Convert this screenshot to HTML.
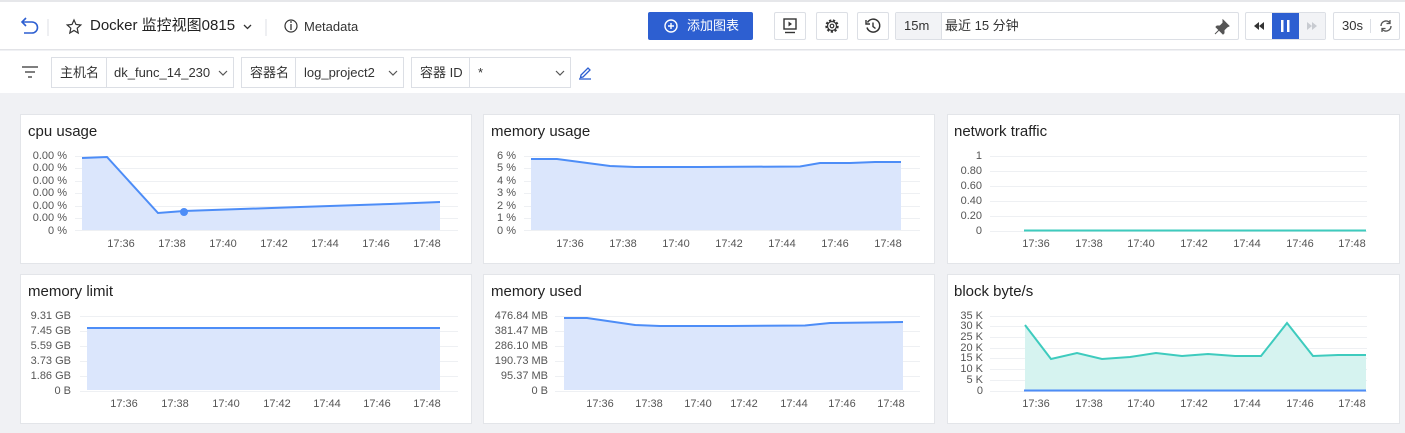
<!DOCTYPE html>
<html><head><meta charset="utf-8"><style>
*{margin:0;padding:0;box-sizing:border-box}
body{width:1405px;height:433px;background:#f0f1f4;font-family:"Liberation Sans","Noto Sans CJK SC",sans-serif;color:#333;position:relative;overflow:hidden}
.abs{position:absolute}
.hdr{left:0;top:0;width:1405px;height:50px;background:#fff;border-top:2px solid #e6e7ea;border-bottom:1px solid #e2e3e7}
.flt{left:0;top:51px;width:1405px;height:42px;background:#fff}
.panel{position:absolute;background:#fff;border:1px solid #e3e5e9}
.ib{position:absolute;top:12px;height:28px;border:1px solid #dcdfe5;border-radius:2px;background:#fff}
.fg{position:absolute;top:57px;height:31px;border:1px solid #dcdfe5;background:#fff;font-size:13px}
.fg span{position:absolute;top:0;line-height:29px;height:29px;white-space:nowrap}
.fg i{position:absolute;top:0;width:1px;height:29px;background:#dcdfe5}
.lh{line-height:26px;top:0 !important;white-space:nowrap}
</style></head><body>
<div class="abs hdr"></div>
<div class="abs flt"></div>

<svg class="abs" style="left:0;top:0" width="640" height="50">
<path d="M23 22 h9 a5.5 5.5 0 0 1 0 11 h-8" fill="none" stroke="#2d5fd1" stroke-width="1.6"/>
<path d="M26 18 l-4 4 l4 4" fill="none" stroke="#2d5fd1" stroke-width="1.6"/>
<line x1="48" y1="19" x2="48" y2="36" stroke="#dcdfe5"/>
<path d="M74 20 l2 4.5 4.8 .5 -3.6 3.2 1 4.8 -4.2 -2.5 -4.2 2.5 1 -4.8 -3.6 -3.2 4.8 -.5z" fill="none" stroke="#333" stroke-width="1.2"/>
<path d="M244 25 l3.5 3.5 3.5 -3.5" fill="none" stroke="#333" stroke-width="1.3"/>
<line x1="266" y1="19" x2="266" y2="36" stroke="#dcdfe5"/>
<circle cx="291" cy="26" r="6" fill="none" stroke="#333" stroke-width="1.2"/>
<line x1="291" y1="24" x2="291" y2="30" stroke="#333" stroke-width="1.3"/><circle cx="291" cy="22" r=".9" fill="#333"/>
</svg>
<div class="abs" style="left:90px;top:16px;font-size:15px;line-height:20px;color:#222;white-space:nowrap">Docker 监控视图0815</div>
<div class="abs" style="left:304px;top:18px;font-size:13px;line-height:18px;color:#333">Metadata</div>

<div class="abs" style="left:648px;top:12px;width:105px;height:28px;background:#2d5fd1;border-radius:2px;color:#fff;font-size:13px">
<svg class="abs" style="left:16px;top:7px" width="14" height="14"><circle cx="7" cy="7" r="6" fill="none" stroke="#fff" stroke-width="1.4"/><path d="M7 4v6M4 7h6" stroke="#fff" stroke-width="1.4"/></svg>
<span class="abs lh" style="left:39px;line-height:28px">添加图表</span></div>

<div class="ib" style="left:774px;width:32px"><svg width="30" height="26"><rect x="9" y="6" width="12" height="10" fill="none" stroke="#333" stroke-width="1.4"/><path d="M13.5 8.5 l3.5 2.5 -3.5 2.5z" fill="#333"/><path d="M10 19.5h10" stroke="#333" stroke-width="1.4"/></svg></div>
<div class="ib" style="left:816px;width:32px"><svg width="30" height="26"><circle cx="15" cy="13" r="5.5" fill="none" stroke="#333" stroke-width="2.4" stroke-dasharray="2.2 1.6"/><circle cx="15" cy="13" r="4.5" fill="none" stroke="#333" stroke-width="1.2"/><circle cx="15" cy="13" r="1.8" fill="none" stroke="#333" stroke-width="1.2"/></svg></div>
<div class="ib" style="left:857px;width:32px"><svg width="30" height="26"><path d="M9.5 9.5 a6.5 6.5 0 1 1 -0.5 5" fill="none" stroke="#333" stroke-width="1.5"/><path d="M8 7v4h4" fill="none" stroke="#333" stroke-width="1.4"/><path d="M15 9.5v4l2.5 2" fill="none" stroke="#333" stroke-width="1.4"/></svg></div>
<div class="ib" style="left:895px;width:344px">
<div class="abs" style="left:0;top:0;width:46px;height:26px;background:#f2f3f6;border-right:1px solid #dcdfe5;font-size:13px;line-height:26px;padding-left:8px">15m</div>
<span class="abs lh" style="left:49px;font-size:13px">最近 15 分钟</span>
<svg class="abs" style="left:318px;top:6px" width="16" height="16"><path d="M9 1 l6 6 -2 1 -3 3 0 3 -1 1 -7 -7 1 -1 3 0 3 -3z M5 11 l-4 4" fill="#555" stroke="#555" stroke-width="1"/></svg>
</div>
<div class="ib" style="left:1245px;width:81px;overflow:hidden">
<svg class="abs" style="left:0;top:0" width="81" height="26"><path d="M8 13 l5-4v8z M13 13 l5-4v8z" fill="#333"/><rect x="26" y="0" width="27" height="26" fill="#2d5fd1"/><rect x="35" y="7" width="2.5" height="12" fill="#fff"/><rect x="41" y="7" width="2.5" height="12" fill="#fff"/><rect x="53" y="0" width="28" height="26" fill="#f2f3f6"/><path d="M61 9 l5 4 -5 4z M66 9 l5 4 -5 4z" fill="#c8cbd1"/></svg></div>
<div class="ib" style="left:1333px;width:67px;font-size:13px"><span class="abs lh" style="left:8px">30s</span><i class="abs" style="left:36px;top:6px;width:1px;height:14px;background:#dcdfe5"></i>
<svg class="abs" style="left:44px;top:5px" width="16" height="16"><path d="M3 8 a5 5 0 0 1 9 -3 M13 8 a5 5 0 0 1 -9 3" fill="none" stroke="#555" stroke-width="1.4"/><path d="M12 2v3.5h-3.5M4 14v-3.5h3.5" fill="none" stroke="#555" stroke-width="1.3"/></svg></div>

<svg class="abs" style="left:20px;top:64px" width="20" height="18"><path d="M2 3h16M5 8h10M8 13h4" stroke="#555" stroke-width="1.6"/></svg>
<div class="fg" style="left:51px;width:183px"><span style="left:8px">主机名</span><i style="left:54px"></i><span style="left:62px">dk_func_14_230</span><svg class="abs" style="left:166px;top:11px" width="10" height="8"><path d="M1 2l4 4 4-4" fill="none" stroke="#555" stroke-width="1.2"/></svg></div>
<div class="fg" style="left:241px;width:163px"><span style="left:8px">容器名</span><i style="left:53px"></i><span style="left:62px">log_project2</span><svg class="abs" style="left:146px;top:11px" width="10" height="8"><path d="M1 2l4 4 4-4" fill="none" stroke="#555" stroke-width="1.2"/></svg></div>
<div class="fg" style="left:411px;width:160px"><span style="left:8px">容器 ID</span><i style="left:57px"></i><span style="left:66px">*</span><svg class="abs" style="left:143px;top:11px" width="10" height="8"><path d="M1 2l4 4 4-4" fill="none" stroke="#555" stroke-width="1.2"/></svg></div>
<svg class="abs" style="left:577px;top:64px" width="16" height="16"><path d="M4 11 l7-7 2 2 -7 7 -2.5 .5z" fill="none" stroke="#2d5fd1" stroke-width="1.3"/><path d="M2 15h12" stroke="#2d5fd1" stroke-width="1.3"/></svg>

<div class="panel" style="left:20px;top:114px;width:452px;height:150px"></div>
<div class="panel" style="left:483px;top:114px;width:452px;height:150px"></div>
<div class="panel" style="left:947px;top:114px;width:453px;height:150px"></div>
<div class="panel" style="left:20px;top:274px;width:452px;height:150px"></div>
<div class="panel" style="left:483px;top:274px;width:452px;height:150px"></div>
<div class="panel" style="left:947px;top:274px;width:453px;height:150px"></div>

<svg class="abs" style="left:0;top:0" width="1405" height="433" font-family="Liberation Sans, sans-serif">
<g font-size="15" fill="#222">
<text x="28" y="136">cpu usage</text><text x="491" y="136">memory usage</text><text x="954" y="136">network traffic</text>
<text x="28" y="296">memory limit</text><text x="491" y="296">memory used</text><text x="954" y="296">block byte/s</text>
</g>
<g stroke="#eef0f3" stroke-width="1">
<path d="M75 156.5h383M75 168.5h383M75 181.5h383M75 193.5h383M75 206.5h383M75 218.5h383M75 230.5h383"/>
<path d="M524 156.5h396M524 168.5h396M524 181.5h396M524 193.5h396M524 206.5h396M524 218.5h396M524 230.5h396"/>
<path d="M990 156.5h377M990 171.5h377M990 186.5h377M990 201.5h377M990 216.5h377M990 231.5h377"/>
<path d="M80 316.5h378M80 331.5h378M80 346.5h378M80 361.5h378M80 376.5h378M80 391.5h378"/>
<path d="M555 316.5h365M555 331.5h365M555 346.5h365M555 361.5h365M555 376.5h365M555 391.5h365"/>
<path d="M990 316.5h377M990 326.5h377M990 337.5h377M990 348.5h377M990 358.5h377M990 369.5h377M990 380.5h377M990 391.5h377"/>
</g>
<g font-size="11" fill="#555" text-anchor="end">
<text x="67" y="159">0.00 %</text><text x="67" y="171">0.00 %</text><text x="67" y="184">0.00 %</text><text x="67" y="196">0.00 %</text><text x="67" y="209">0.00 %</text><text x="67" y="221">0.00 %</text><text x="67" y="234">0 %</text>
<text x="516" y="159">6 %</text><text x="516" y="171">5 %</text><text x="516" y="184">4 %</text><text x="516" y="196">3 %</text><text x="516" y="209">2 %</text><text x="516" y="221">1 %</text><text x="516" y="234">0 %</text>
<text x="982" y="159">1</text><text x="982" y="174">0.80</text><text x="982" y="189">0.60</text><text x="982" y="204">0.40</text><text x="982" y="219">0.20</text><text x="982" y="234">0</text>
<text x="71" y="319">9.31 GB</text><text x="71" y="334">7.45 GB</text><text x="71" y="349">5.59 GB</text><text x="71" y="364">3.73 GB</text><text x="71" y="379">1.86 GB</text><text x="71" y="394">0 B</text>
<text x="548" y="319">476.84 MB</text><text x="548" y="334">381.47 MB</text><text x="548" y="349">286.10 MB</text><text x="548" y="364">190.73 MB</text><text x="548" y="379">95.37 MB</text><text x="548" y="394">0 B</text>
<text x="983" y="319">35 K</text><text x="983" y="329">30 K</text><text x="983" y="340">25 K</text><text x="983" y="351">20 K</text><text x="983" y="361">15 K</text><text x="983" y="372">10 K</text><text x="983" y="383">5 K</text><text x="983" y="394">0</text>
</g>
<g font-size="11" fill="#555" text-anchor="middle">
<text x="121" y="247">17:36</text><text x="172" y="247">17:38</text><text x="223" y="247">17:40</text><text x="274" y="247">17:42</text><text x="325" y="247">17:44</text><text x="376" y="247">17:46</text><text x="427" y="247">17:48</text>
<text x="570" y="247">17:36</text><text x="623" y="247">17:38</text><text x="676" y="247">17:40</text><text x="729" y="247">17:42</text><text x="782" y="247">17:44</text><text x="835" y="247">17:46</text><text x="888" y="247">17:48</text>
<text x="1036" y="247">17:36</text><text x="1089" y="247">17:38</text><text x="1141" y="247">17:40</text><text x="1194" y="247">17:42</text><text x="1247" y="247">17:44</text><text x="1300" y="247">17:46</text><text x="1352" y="247">17:48</text>
<text x="124" y="407">17:36</text><text x="175" y="407">17:38</text><text x="226" y="407">17:40</text><text x="277" y="407">17:42</text><text x="327" y="407">17:44</text><text x="377" y="407">17:46</text><text x="427" y="407">17:48</text>
<text x="600" y="407">17:36</text><text x="649" y="407">17:38</text><text x="698" y="407">17:40</text><text x="744" y="407">17:42</text><text x="794" y="407">17:44</text><text x="842" y="407">17:46</text><text x="891" y="407">17:48</text>
<text x="1036" y="407">17:36</text><text x="1089" y="407">17:38</text><text x="1141" y="407">17:40</text><text x="1194" y="407">17:42</text><text x="1247" y="407">17:44</text><text x="1300" y="407">17:46</text><text x="1352" y="407">17:48</text>
</g>
<path d="M82 158L107 157L158 213L184 211L300 207L390 204L440 202V230H82Z" fill="#dbe6fc"/>
<path d="M82 158L107 157L158 213L184 211L300 207L390 204L440 202" fill="none" stroke="#4d8df7" stroke-width="2"/>
<circle cx="184" cy="212" r="4" fill="#4d8df7"/>
<path d="M531 159L557 159L610 166L635 167L700 167L800 166.5L820 163L850 163L875 162L901 162V230H531Z" fill="#dbe6fc"/>
<path d="M531 159L557 159L610 166L635 167L700 167L800 166.5L820 163L850 163L875 162L901 162" fill="none" stroke="#4d8df7" stroke-width="2"/>
<path d="M1024 230.5H1366" stroke="#3ecbbe" stroke-width="2"/>
<path d="M87 328H440V390H87Z" fill="#dbe6fc"/>
<path d="M87 328H440" stroke="#4d8df7" stroke-width="2"/>
<path d="M564 318L587 318L635 325L660 326L730 326L805 325.5L830 323L870 322.5L903 322V390H564Z" fill="#dbe6fc"/>
<path d="M564 318L587 318L635 325L660 326L730 326L805 325.5L830 323L870 322.5L903 322" fill="none" stroke="#4d8df7" stroke-width="2"/>
<path d="M1025 325L1051 359L1077 353L1102 359L1130 357L1156 353L1182 356L1208 354L1235 356L1261 356L1287 323L1313 356L1338 355L1366 355V390H1025Z" fill="#d6f3f0"/>
<path d="M1025 325L1051 359L1077 353L1102 359L1130 357L1156 353L1182 356L1208 354L1235 356L1261 356L1287 323L1313 356L1338 355L1366 355" fill="none" stroke="#3ecbbe" stroke-width="2"/>
<path d="M1024 390.5H1366" stroke="#4d8df7" stroke-width="2"/>
</svg>
</body></html>
